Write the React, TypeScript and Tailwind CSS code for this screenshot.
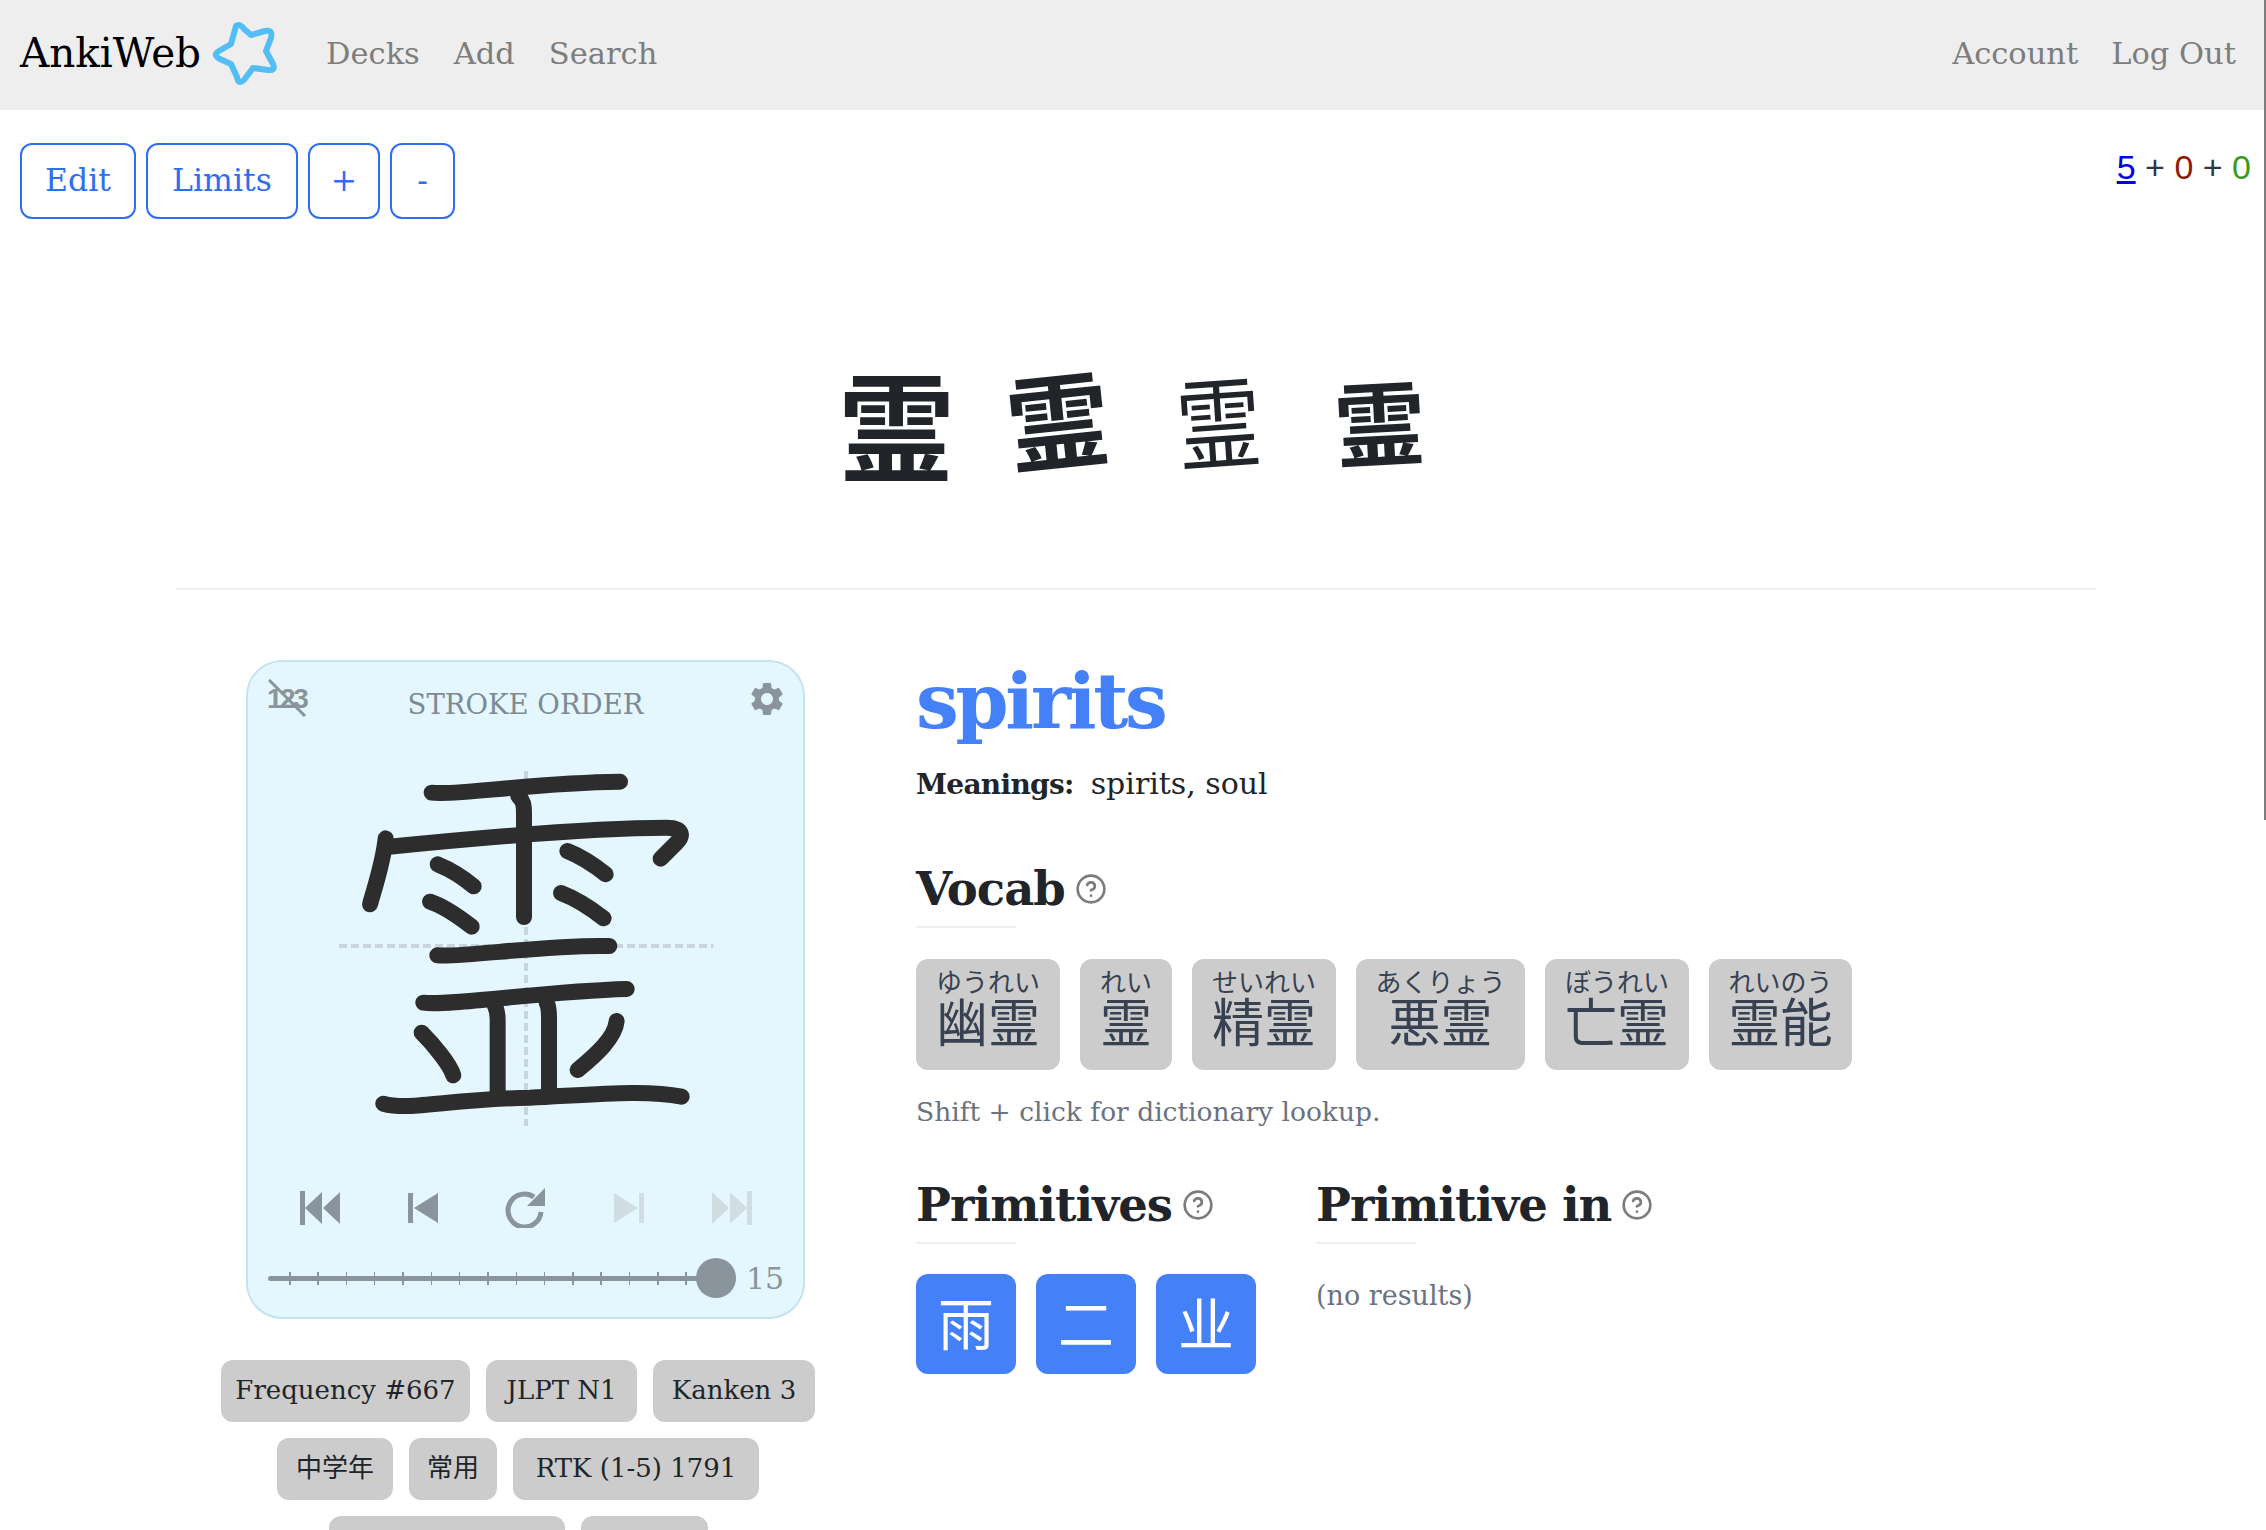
import { CircleHelp } from "lucide-react";
import { MdSettings } from "react-icons/md";

const cjk = "font-['Noto_Sans_CJK_JP',sans-serif]";

const vocab = [
  { kana: "ゆうれい", word: "幽霊", w: "w-[144px]" },
  { kana: "れい", word: "霊", w: "w-[92px]" },
  { kana: "せいれい", word: "精霊", w: "w-[144px]" },
  { kana: "あくりょう", word: "悪霊", w: "w-[169px]" },
  { kana: "ぼうれい", word: "亡霊", w: "w-[144px]" },
  { kana: "れいのう", word: "霊能", w: "w-[143px]" },
];

const tags = [
  { label: "Frequency #667", w: "w-[249px]" },
  { label: "JLPT N1", w: "w-[151px]" },
  { label: "Kanken 3", w: "w-[162px]" },
  { label: "中学年", w: "w-[116px]" },
  { label: "常用", w: "w-[88px]" },
  { label: "RTK (1-5) 1791", w: "w-[246px]" },
  { label: "", w: "w-[236px]" },
  { label: "", w: "w-[127px]" },
];

const strokes = [
  "M305 95 C380 105 600 65 870 62",
  "M167 232 C160 300 140 360 120 430",
  "M170 258 C400 235 800 200 1010 200 C1060 200 1060 225 1040 245 L992 293",
  "M565 105 C580 120 582 130 582 160 L582 468",
  "M323 310 C360 325 400 350 431 376",
  "M300 422 C340 435 390 470 425 497",
  "M712 270 C750 285 790 310 827 340",
  "M693 396 C730 410 780 440 821 472",
  "M322 583 C400 590 650 550 838 555",
  "M280 725 C360 735 650 690 890 684",
  "M495 735 C500 745 503 760 503 780 L503 1000",
  "M650 725 C655 735 657 750 657 770 L657 990",
  "M275 815 C310 850 360 910 370 943",
  "M860 780 C855 830 800 880 743 927",
  "M160 1028 C240 1050 350 1015 600 1010 C800 1000 950 985 1055 1007",
];

function Star() {
  return (
    <svg viewBox="212 20 68 66" className="w-[68px] h-[66px] ml-[10px]" fill="none" stroke="#54bdf5" strokeWidth="6" strokeLinejoin="round">
      <path d="M237 25 Q241 22 245 28 L252 34 L266 30 Q274 28 272 37 L267 50 L274 63 Q277 70 269 69 L254 67 L245 79 Q239 84 238 76 L232 63 L221 58 Q213 54 220 50 L232 43 Z" />
    </svg>
  );
}

function HelpIcon() {
  return <CircleHelp className="w-[32px] h-[32px] text-[#7c7c7c]" strokeWidth={2} />;
}

function NoNumbers() {
  return (
    <svg viewBox="0 0 43 38" className="w-[43px] h-[38px]">
      <text x="0" y="29" fontFamily="Liberation Sans, sans-serif" fontWeight="700" fontSize="28" letterSpacing="-2.5" fill="#8a949c">
        123
      </text>
      <line x1="2" y1="1" x2="38" y2="37" stroke="#8a949c" strokeWidth="3" />
    </svg>
  );
}

function SkipIcon({ double, flip, color }: { double?: boolean; flip?: boolean; color: string }) {
  return (
    <svg viewBox="0 0 40 34" className={`w-[40px] h-[34px] ${flip ? "-scale-x-100" : ""}`} fill={color}>
      {double ? (
        <>
          <rect x="0" y="0" width="5" height="34" />
          <path d="M5 17 L22 1 V33 Z" />
          <path d="M23 17 L40 1 V33 Z" />
        </>
      ) : (
        <>
          <rect x="5" y="2" width="5" height="30" />
          <path d="M11 17 L35 2 V32 Z" />
        </>
      )}
    </svg>
  );
}

function ReplayIcon() {
  return (
    <svg viewBox="0 0 41 40" className="w-[41px] h-[40px]" fill="none">
      <path d="M36 24 A16.5 16.5 0 1 1 29 9" stroke="#8a949c" strokeWidth="5" />
      <path d="M40 0 V18 H22 Z" fill="#8a949c" />
    </svg>
  );
}

function SectionTitle({ title }: { title: string }) {
  return (
    <>
      <h2 className="flex items-center gap-[10px] text-[46.5px] leading-[60px] font-bold text-[#212529] tracking-[-1px]">
        {title}
        <HelpIcon />
      </h2>
      <div className="mt-[7px] w-[100px] h-[2px] bg-[#eeeeee]" />
    </>
  );
}

export default function App() {
  return (
    <div className="relative h-[1530px] overflow-hidden bg-white text-[#212529] font-['DejaVu_Serif','Noto_Sans_CJK_JP',serif]">
      <nav className="flex items-center justify-between h-[110px] pl-[20px] pr-[30px] pb-[3px] bg-[#eeeeee] text-[30.5px] text-[#7d7d7d]">
        <div className="flex items-center">
          <span className="text-[40.5px] text-black">AnkiWeb</span>
          <Star />
          <div className="flex gap-[34px] ml-[47px]">
            <span>Decks</span>
            <span>Add</span>
            <span>Search</span>
          </div>
        </div>
        <div className="flex gap-[33px]">
          <span>Account</span>
          <span>Log Out</span>
        </div>
      </nav>

      <div className="flex justify-between pl-[20px] pr-[15px] pt-[33px]">
        <div className="flex gap-[10px] text-[31.5px] text-[#2f6fed]">
          <button className="w-[116px] h-[76px] border-2 border-[#2f6fed] rounded-[12px]">Edit</button>
          <button className="w-[152px] h-[76px] border-2 border-[#2f6fed] rounded-[12px]">Limits</button>
          <button className="w-[72px] h-[76px] border-2 border-[#2f6fed] rounded-[12px]">+</button>
          <button className="w-[65px] h-[76px] border-2 border-[#2f6fed] rounded-[12px]">-</button>
        </div>
        <div className="text-[34px] leading-[48px] text-[#2d3748] font-['Liberation_Sans',sans-serif]">
          <a className="text-[#0000ee] underline">5</a> + <span className="text-[#8b1a0a]">0</span> + <span className="text-[#3a9a1f]">0</span>
        </div>
      </div>

      <div className={`flex justify-center h-[150px] mt-[128px] ml-[10px] items-center text-[#212529] ${cjk}`}>
        <span className="w-[161px] text-center text-[118px] leading-[150px] font-bold">霊</span>
        <span className="w-[161px] text-center text-[104px] leading-[150px] font-bold -rotate-6 -translate-y-[6px]">霊</span>
        <span className="w-[161px] text-center text-[100px] leading-[150px] scale-x-[0.85] rotate-[-4deg] -translate-y-[4px]">霊</span>
        <span className="w-[161px] text-center text-[92px] leading-[150px] font-bold -rotate-3 -translate-y-[3px]">霊</span>
      </div>

      <div className="h-[2px] ml-[176px] mr-[170px] mt-[91px] bg-[#eeeeee]" />

      <main className="flex pl-[246px] mt-[70px]">
        <div className="w-[559px] shrink-0">
          <section className="flex flex-col h-[659px] border-2 border-[#c5e3ef] rounded-[36px] bg-[#e4f7fe]">
            <header className="flex justify-between h-[99px] px-[19px] pt-[17px]">
              <div className="w-[43px]">
                <NoNumbers />
              </div>
              <span className="mt-[7px] text-[27.5px] leading-[36px] text-[#7d8a94]">STROKE ORDER</span>
              <div className="flex justify-end w-[43px]">
                <MdSettings className="w-[40px] h-[40px] -mr-[3px] text-[#8a949c]" />
              </div>
            </header>
            <div className="flex justify-center pl-[8px]">
              <svg viewBox="0 0 1200 1110" className="w-[400px] h-[370px]" fill="none" strokeLinecap="round" strokeLinejoin="round">
                <path d="M27 555 H1150" stroke="#c8d5dc" strokeWidth="12" strokeDasharray="24 12" strokeLinecap="butt" />
                <path d="M588 30 V1095" stroke="#c8d5dc" strokeWidth="12" strokeDasharray="24 12" strokeLinecap="butt" />
                {strokes.map((d) => (
                  <path key={d} d={d} stroke="#2d2d2d" strokeWidth="48" />
                ))}
              </svg>
            </div>
            <div className="flex justify-center items-center h-[40px] mt-[57px]">
              <div className="flex justify-center w-[103px]">
                <SkipIcon double color="#8a949c" />
              </div>
              <div className="flex justify-center w-[103px]">
                <SkipIcon color="#8a949c" />
              </div>
              <div className="flex justify-center w-[103px]">
                <ReplayIcon />
              </div>
              <div className="flex justify-center w-[103px]">
                <SkipIcon flip color="#d0dde3" />
              </div>
              <div className="flex justify-center w-[103px]">
                <SkipIcon double flip color="#d0dde3" />
              </div>
            </div>
            <div className="flex items-center h-[40px] mt-[30px] pl-[20px]">
              <div className="relative w-[468px] h-[5px] rounded-full bg-[#8a949c]">
                <div className="absolute left-[21px] top-[-4px] flex justify-between w-[398px]">
                  {Array.from({ length: 15 }, (_, i) => (
                    <span key={i} className="w-[1.5px] h-[13px] bg-[#8a949c]" />
                  ))}
                </div>
                <span className="absolute right-0 top-[-18px] w-[40px] h-[40px] rounded-full bg-[#8a949c]" />
              </div>
              <span className="ml-[10px] text-[30px] text-[#8a949c]">15</span>
            </div>
          </section>

          <div className="flex flex-wrap justify-center gap-[16px] w-[600px] -ml-[28px] mt-[41px]">
            {tags.map((t, i) => (
              <span
                key={i}
                className={`${t.w} h-[62px] rounded-[12px] bg-[#cccccc] text-center text-[26px] leading-[60px] text-[#212529]`}
              >
                {t.label}
              </span>
            ))}
          </div>
        </div>

        <div className="ml-[111px]">
          <h1 className="mt-[2px] text-[76px] leading-[80px] font-bold tracking-[-3.3px] text-[#4480f7]">spirits</h1>
          <p className="flex items-baseline gap-[17px] mt-[22px] text-[30px] leading-[40px]">
            <strong className="text-[28px] font-bold tracking-[-0.7px]">Meanings:</strong>
            <span>spirits, soul</span>
          </p>
          <div className="mt-[54px]">
            <SectionTitle title="Vocab" />
          </div>
          <div className={`flex gap-[20px] mt-[31px] ${cjk}`}>
            {vocab.map((v) => (
              <div key={v.word} className={`${v.w} flex flex-col items-center h-[111px] pt-[8px] rounded-[12px] bg-[#cccccc] text-[#374151]`}>
                <span className="text-[26px] leading-[27px]">{v.kana}</span>
                <span className="text-[52px] leading-[52px]">{v.word}</span>
              </div>
            ))}
          </div>
          <p className="mt-[22px] text-[26.5px] leading-[40px] text-[#6b7280]">Shift + click for dictionary lookup.</p>
          <div className="flex mt-[43px]">
            <div className="w-[400px]">
              <SectionTitle title="Primitives" />
              <div className={`flex gap-[20px] mt-[30px] text-[56px] text-white ${cjk}`}>
                <span className="w-[100px] h-[100px] rounded-[12px] bg-[#4480f7] text-center leading-[94px]">雨</span>
                <span className="w-[100px] h-[100px] rounded-[12px] bg-[#4480f7] text-center leading-[94px]">二</span>
                <span className="w-[100px] h-[100px] rounded-[12px] bg-[#4480f7] text-center leading-[94px]">业</span>
              </div>
            </div>
            <div>
              <SectionTitle title="Primitive in" />
              <p className="mt-[32px] text-[27px] leading-[40px] text-[#6b7280]">(no results)</p>
            </div>
          </div>
        </div>
      </main>

      <div className="absolute right-0 top-0 w-[2px] h-[820px] bg-[#7d7d7d]" />
    </div>
  );
}
